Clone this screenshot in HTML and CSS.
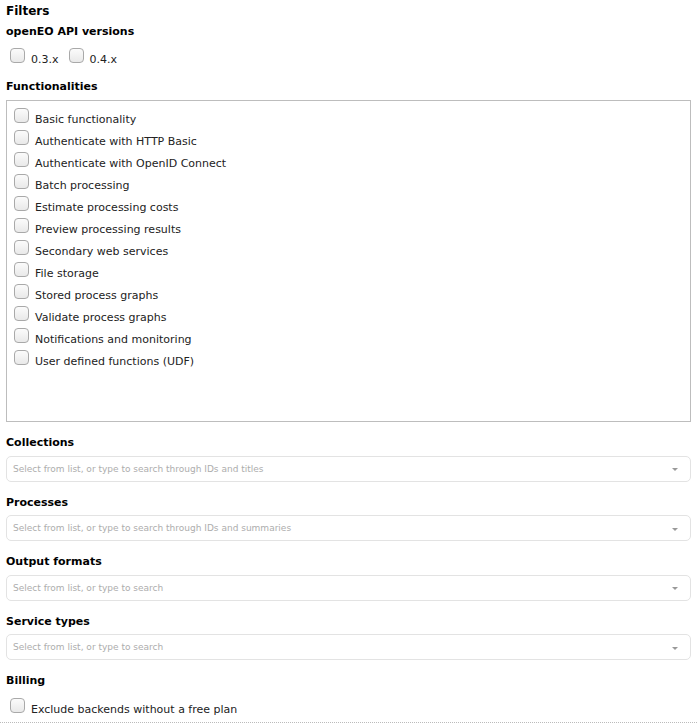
FILE: index.html
```html
<!DOCTYPE html>
<html>

<head>
	<meta charset="utf-8">
	<link rel="stylesheet" href="styles.css">
</head>

<body>
	<div class="filters">
		<h2 class="title">Filters</h2>

		<h3>openEO API versions</h3>
		<div class="versions"><label class="inline"><input type="checkbox" class="check">0.3.x</label><label class="inline"><input type="checkbox" class="check">0.4.x</label></div>

		<h3 class="gap">Functionalities</h3>
		<div class="functionalities">
			<label class="row"><input type="checkbox" class="check">Basic functionality</label>
			<label class="row"><input type="checkbox" class="check">Authenticate with HTTP Basic</label>
			<label class="row"><input type="checkbox" class="check">Authenticate with OpenID Connect</label>
			<label class="row"><input type="checkbox" class="check">Batch processing</label>
			<label class="row"><input type="checkbox" class="check">Estimate processing costs</label>
			<label class="row"><input type="checkbox" class="check">Preview processing results</label>
			<label class="row"><input type="checkbox" class="check">Secondary web services</label>
			<label class="row"><input type="checkbox" class="check">File storage</label>
			<label class="row"><input type="checkbox" class="check">Stored process graphs</label>
			<label class="row"><input type="checkbox" class="check">Validate process graphs</label>
			<label class="row"><input type="checkbox" class="check">Notifications and monitoring</label>
			<label class="row"><input type="checkbox" class="check">User defined functions (UDF)</label>
		</div>

		<h3 class="section">Collections</h3>
		<div class="select">
			<span class="placeholder">Select from list, or type to search through IDs and titles</span>
			<span class="caret"></span>
		</div>

		<h3 class="section">Processes</h3>
		<div class="select">
			<span class="placeholder">Select from list, or type to search through IDs and summaries</span>
			<span class="caret"></span>
		</div>

		<h3 class="section">Output formats</h3>
		<div class="select">
			<span class="placeholder">Select from list, or type to search</span>
			<span class="caret"></span>
		</div>

		<h3 class="section">Service types</h3>
		<div class="select">
			<span class="placeholder">Select from list, or type to search</span>
			<span class="caret"></span>
		</div>

		<h3 class="section">Billing</h3>
		<div class="billing"><label class="inline"><input type="checkbox" class="check">Exclude backends without a free plan</label></div>
	</div>
	<div class="divider"></div>
</body>

</html>
```

FILE: styles.css
```css
body {
	margin: 0;
	font: 11px "DejaVu Sans", sans-serif;
	color: #222222;
	background-color: #ffffff;
}

.filters {
	padding: 0 6px;
}

.title {
	margin: 4px 0 0 0;
	font-size: 12px;
	line-height: 14px;
	font-weight: bold;
	color: #000000;
}

h3 {
	margin: 7px 0 0 0;
	font-size: 11px;
	line-height: 13px;
	font-weight: bold;
	color: #000000;
}

h3.gap {
	margin-top: 10px;
}

h3.section {
	margin: 14px 0 6.5px 0;
}

.versions,
.billing {
	height: 22px;
	margin-top: 10px;
	line-height: 22px;
}

.billing {
	margin-top: 11px;
}

.inline {
	margin-right: 6px;
	white-space: nowrap;
}

.check {
	-webkit-appearance: none;
	appearance: none;
	display: inline-block;
	vertical-align: baseline;
	width: 15px;
	height: 15px;
	margin: 0 6px 0 4px;
	border: 1px solid #a9a9a9;
	border-radius: 4px;
	background: linear-gradient(#fbfbfb, #e9e9e9);
	box-sizing: border-box;
}

.functionalities {
	box-sizing: border-box;
	height: 322px;
	margin-top: 7px;
	padding: 7px 0 0 3px;
	border: 1px solid #bdbdbd;
}

.row {
	display: block;
	height: 22px;
	line-height: 22px;
}

.select {
	display: flex;
	align-items: center;
	justify-content: space-between;
	box-sizing: border-box;
	height: 26px;
	padding: 0 12px 0 6px;
	border: 1px solid #e3e3e3;
	border-radius: 5px;
}

.placeholder {
	font-size: 9px;
	color: #adadad;
}

.caret {
	width: 0;
	height: 0;
	margin-top: 2px;
	border-left: 3px solid transparent;
	border-right: 3px solid transparent;
	border-top: 3px solid #999999;
}

.divider {
	margin-top: 2px;
	border-top: 1px dotted #bbbbbb;
}
```
